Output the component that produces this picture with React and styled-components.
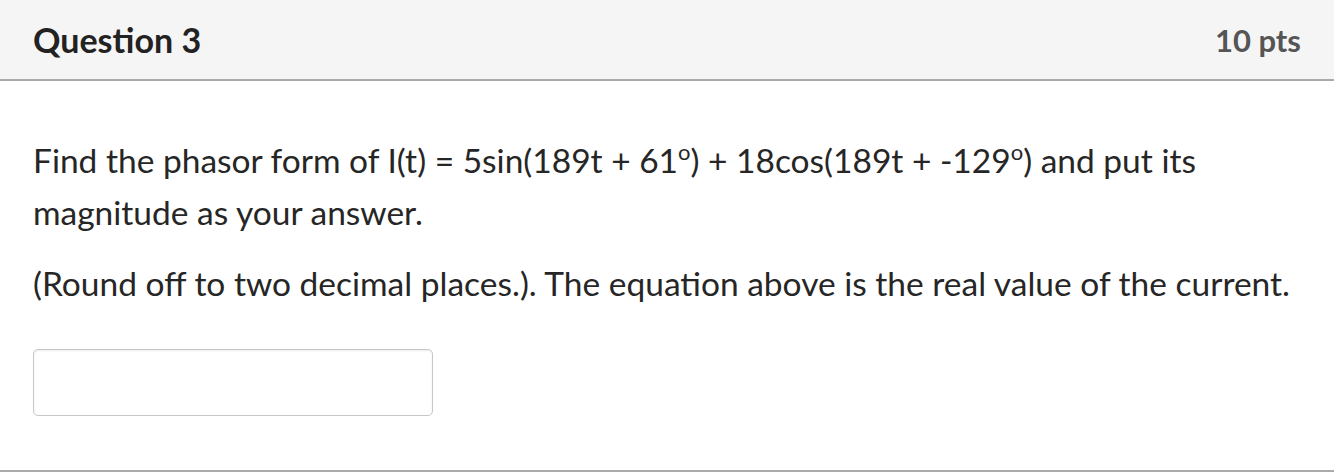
import React from 'react';
import styled, { createGlobalStyle } from 'styled-components';

const GlobalStyle = createGlobalStyle`
  html, body {
    margin: 0;
    padding: 0;
    background: #fff;
  }
  body {
    font-family: Lato, "Open Sans", sans-serif;
    color: #262626;
  }
`;

const Card = styled.div`
  width: 1334px;
  border-bottom: 2px solid #aaaaaa;
  background: #fff;
`;

const Header = styled.div`
  display: flex;
  justify-content: space-between;
  align-items: center;
  height: 79px;
  padding: 0 33px 0 33px;
  background: #f5f5f5;
  border-bottom: 2px solid #aaaaaa;
`;

const Title = styled.h2`
  margin: 0;
  font-size: 34px;
  font-weight: 700;
  color: #222;
`;

const Points = styled.span`
  font-size: 31px;
  font-weight: 700;
  color: #555;
`;

const Body = styled.div`
  padding: 53px 33px 54px;
`;

const Text = styled.p`
  margin: 0 0 19px;
  font-size: 33.5px;
  line-height: 52px;
  color: #262626;

  &:last-of-type {
    margin-bottom: 0;
  }

  sup {
    font-size: 22px;
    line-height: 0;
    vertical-align: 13px;
  }
`;

const AnswerInput = styled.input`
  display: block;
  box-sizing: border-box;
  width: 400px;
  height: 67px;
  margin: 40px 0 0;
  border: 1px solid #c7c7c7;
  border-radius: 5px;
  box-shadow: inset 0 1px 2px rgba(0, 0, 0, 0.08);
  font-family: inherit;
  font-size: 26px;
  padding: 0 12px;
`;

export default function App() {
  return (
    <>
      <GlobalStyle />
      <Card>
        <Header>
          <Title>Question 3</Title>
          <Points>10 pts</Points>
        </Header>
        <Body>
          <Text>
            Find the phasor form of I(t) = 5sin(189t + 61<sup>o</sup>) + 18cos(189t + -129<sup>o</sup>) and put its magnitude as your answer.
          </Text>
          <Text>
            (Round off to two decimal places.). The equation above is the real value of the current.
          </Text>
          <AnswerInput type="text" />
        </Body>
      </Card>
    </>
  );
}
